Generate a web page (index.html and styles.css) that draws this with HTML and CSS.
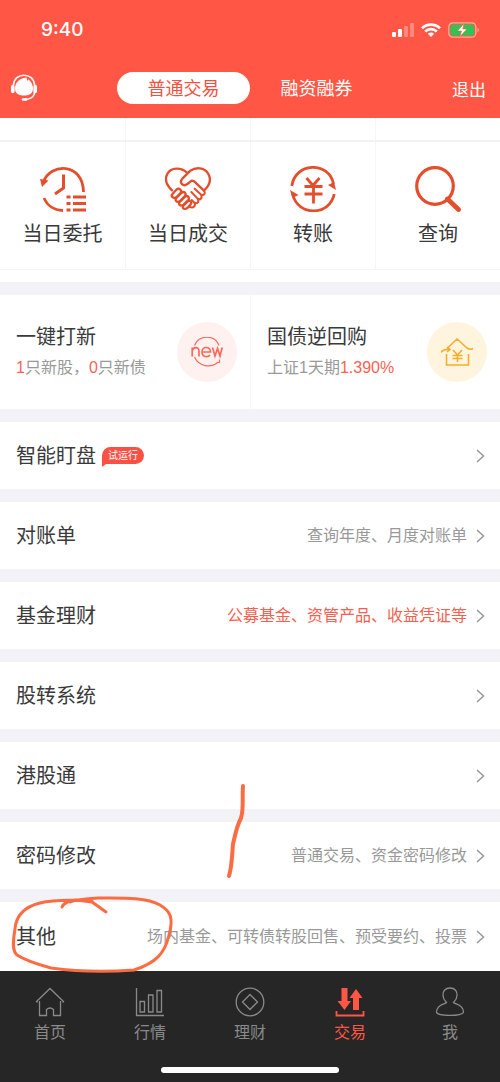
FILE: index.html
```html
<!DOCTYPE html>
<html lang="zh-CN">
<head>
<meta charset="utf-8">
<meta name="viewport" content="width=device-width, initial-scale=1">
<title>交易</title>
<link rel="stylesheet" href="styles.css">
</head>
<body>
<div class="app">
  <header class="header">
    <div class="status">
      <span class="time">9:40</span>
      <div class="status-icons">
        <svg width="22" height="14" viewBox="0 0 22 14" fill="#fff"><rect y="9" width="4" height="5" rx="1"/><rect x="6" y="6" width="4" height="8" rx="1"/><rect x="12" y="3" width="4" height="11" rx="1" opacity=".3"/><rect x="18" width="4" height="14" rx="1" opacity=".3"/></svg>
        <svg width="20" height="14" viewBox="0 0 20 14" fill="none" stroke="#fff" stroke-width="2.7"><path d="M1 5.2C6 .3 14 .3 19 5.200M4.200 8.500C7.500 5.300 12.500 5.300 15.800 8.500"/><path d="M10 14 6.800 10.800Q10 8.300 13.200 10.800Z" fill="#fff" stroke="none"/></svg>
        <svg width="32" height="16" viewBox="0 0 32 16"><rect x=".8" y=".8" width="27" height="14.400" rx="4" fill="none" stroke="#ffb09a" stroke-width="1.300"/><rect x="2.500" y="2.500" width="23.600" height="11" rx="2.500" fill="#30c455"/><path d="M29.500 5.500Q32 8 29.500 10.500Z" fill="#ffb09a"/><path d="M16 1.500 9.500 9H13.500L12 14.500 19 7H14.800Z" fill="#fff" stroke="#ff5645" stroke-width=".6"/></svg>
      </div>
    </div>
    <div class="topnav">
      <button class="service" aria-label="客服">
        <svg width="28" height="28" viewBox="0 0 28 28" fill="none" stroke="#fff"><path d="M3.500 11C4 -2 24 -2 24.500 11" stroke-width="1.500"/><path d="M2.800 12.500v5M25.200 12.500v5" stroke-width="3.600" stroke-linecap="round"/><path d="M16.500 3.500C9 4 5 9 5 14.500 5 19 8 21.500 14 21.500S23 19 23 14.500C23 10 20 6 18 5.500L17.500 7.500Z" fill="#fff" stroke="none"/><path d="M24.500 18C24.500 23 20 25.500 14 25.500" stroke-width="1.600"/><path d="M13 25.500H16" stroke-width="2.600" stroke-linecap="round"/></svg>
      </button>
      <div class="tabs">
        <button class="tab tab-on">普通交易</button>
        <button class="tab">融资融券</button>
      </div>
      <button class="logout">退出</button>
    </div>
  </header>

  <main class="main">
    <section class="panel">
      <div class="grid grid-tail"><span></span><span></span><span></span><span></span></div>
      <div class="grid">
        <button class="cell">
          <svg width="46" height="46" viewBox="0 0 46 46" fill="none" stroke="#e34f2c" stroke-width="2.800"><path d="M3.500 16C10 -3 43 -4 43.500 26M4 32C8 41 14 44 23 44.500"/><path d="M0 13 8.500 14.500 2 21Z" fill="#e34f2c" stroke="none"/><path d="M23.500 8.500V22L15 28" stroke-width="3"/><path d="M26.500 31h4M26.500 37.500h4M26.500 44h4M33 31h13M33 37.500h13M33 44h13" stroke-width="3"/></svg>
          <span>当日委托</span>
        </button>
        <button class="cell">
          <svg width="46" height="46" viewBox="45 34 138 138" fill="none" stroke="#e34f2c" stroke-width="7" stroke-linecap="round" stroke-linejoin="round"><path d="M66 107C48 90 44 71 53 56 63 39 92 36 111 54"/><path d="M162 108C180 91 184 72 174 56 163 38 138 37 121 48L97 72C86 85 100 97 112 88L125 78C133 78 135 82 139 86L162 108"/><path d="M68 117 79 105C88 98 98 107 91 116L80 127C70 134 61 125 68 117Z"/><path d="M80 129 94 115C103 108 111 117 104 125L90 139C80 146 72 136 80 129Z"/><path d="M90 141 104 127C113 120 121 129 114 137L101 150C91 157 82 148 90 141Z"/><path d="M101 152 112 141C120 135 128 143 121 150L113 159C104 167 93 160 101 152Z"/><path d="M162 108C168 118 160 124 152 119L134 102M152 119C159 130 151 137 143 132L124 112M143 132C149 143 141 149 133 144L125 136M133 144C138 153 131 161 120 157L117 156" stroke-width="6"/></svg>
          <span>当日成交</span>
        </button>
        <button class="cell">
          <svg width="46" height="46" viewBox="0 0 46 46" fill="none" stroke="#e34f2c" stroke-width="2.800"><path d="M1.800 20C5 -4 39 -5 43.500 18M44.200 28C40 50 8 51 2.500 28"/><path d="M38 19 44 16 46 24ZM0 24 8.500 29 2.500 32Z" fill="#e34f2c" stroke="none"/><path d="M16.500 12 23 19.500 29.500 12M14.500 20.500h18M14.500 28h18M23.500 20v17.500" stroke-width="2.800"/></svg>
          <span>转账</span>
        </button>
        <button class="cell">
          <svg width="46" height="46" viewBox="0 0 46 46" fill="none" stroke="#e34f2c"><circle cx="20" cy="20" r="18.300" stroke-width="3.200"/><path d="M32.500 33 43.500 43.500" stroke-width="4.800" stroke-linecap="round"/></svg>
          <span>查询</span>
        </button>
      </div>
    </section>

    <section class="cards">
      <a class="card" href="#ipo">
        <div>
          <h2>一键打新</h2>
          <p><em>1</em>只新股，<em>0</em>只新债</p>
        </div>
        <span class="badge badge-red">
          <svg width="32" height="30" viewBox="0 0 32 30" fill="none" stroke="#fa6a5b"><path d="M3.500 8.500C8 -2.500 24 -2.500 28 8.500M3.500 20C8 30 20 31 26.500 25.500H28.500V22.500" stroke-width="1.200"/><path d="M1.200 19.500V10.500M1.200 14C2 9.500 8 9.500 8 14V19.500M11 15H19.500C19.500 9 11 9 11 15 11 20.500 17 20.500 19 18M21.500 10.500 24 19 26.500 11.500 29 19 31.200 10.500" stroke-width="1.700"/></svg>
        </span>
      </a>
      <a class="card" href="#repo">
        <div>
          <h2>国债逆回购</h2>
          <p>上证1天期<em>1.390%</em></p>
        </div>
        <span class="badge badge-gold">
          <svg width="32" height="30" viewBox="0 0 32 30" fill="none" stroke="#f3ae2e" stroke-width="1.600"><path d="M7 10.500 16 2 26 11C28 12.500 30 12.500 32 11.500M0 15.500C2 12 5 12 9 12.500M6 10 9 12.500 6 15M5.500 17V28H27.500V17M12 13 16.500 18 21 13M11.500 18.500H21.500M11.500 21.500H21.500M16.500 18V25"/></svg>
        </span>
      </a>
    </section>

    <nav class="list">
      <a class="row" href="#watch"><span class="name">智能盯盘</span><span class="tag">试运行</span><span class="note"></span><svg class="chev" viewBox="0 0 9 14"><path d="M1 1 7.500 7 1 13"/></svg></a>
      <a class="row" href="#bill"><span class="name">对账单</span><span class="note">查询年度、月度对账单</span><svg class="chev" viewBox="0 0 9 14"><path d="M1 1 7.500 7 1 13"/></svg></a>
      <a class="row" href="#fund"><span class="name">基金理财</span><span class="note hot">公募基金、资管产品、收益凭证等</span><svg class="chev" viewBox="0 0 9 14"><path d="M1 1 7.500 7 1 13"/></svg></a>
      <a class="row" href="#neeq"><span class="name">股转系统</span><span class="note"></span><svg class="chev" viewBox="0 0 9 14"><path d="M1 1 7.500 7 1 13"/></svg></a>
      <a class="row" href="#hk"><span class="name">港股通</span><span class="note"></span><svg class="chev" viewBox="0 0 9 14"><path d="M1 1 7.500 7 1 13"/></svg></a>
      <a class="row" href="#password"><span class="name">密码修改</span><span class="note">普通交易、资金密码修改</span><svg class="chev" viewBox="0 0 9 14"><path d="M1 1 7.500 7 1 13"/></svg>
        <svg class="mark mark-line" width="20" height="96" viewBox="0 0 20 96"><path d="M16 2C15 14 17 25 14 34 9 44 8 52 6 60 5 72 5 82 2 92"/></svg></a>
      <a class="row" href="#other"><span class="name">其他</span><span class="note">场内基金、可转债转股回售、预受要约、投票</span><svg class="chev" viewBox="0 0 9 14"><path d="M1 1 7.500 7 1 13"/></svg>
        <svg class="mark mark-ring" width="164" height="78" viewBox="0 0 164 78"><path d="M50 10C52 5 58 4 64 3L80 5 94 15M80 4C62 3 40 3 28 6 12 10 4 18 3 32 1 44 0 54 5 58 14 64 28 68 39 71 68 75 96 75 122 73 144 66 153 56 157 38 162 20 158 14 148 8 134 0 110 1 86 1 76 2 66 2 58 5"/></svg></a>
    </nav>
  </main>

  <footer class="tabbar">
    <nav class="tabitems">
      <a href="#home"><svg width="30" height="30" viewBox="0 0 30 30"><path d="M2.500 15.500 1.500 14.500 15 1.500 28.500 14.500 27.500 15.500M4.500 14V28.500H11.500V22.500Q15 19.500 18.500 22.500V28.500H25.500V14"/></svg>首页</a>
      <a href="#market"><svg width="30" height="30" viewBox="0 0 30 30"><path d="M1.500 1V28.500H29M5 14.500H9.500V25H5ZM13.500 8H18V25H13.500ZM22 3.500H26.500V25H22Z"/></svg>行情</a>
      <a href="#wealth"><svg width="30" height="30" viewBox="0 0 30 30"><circle cx="15" cy="15" r="13.800"/><path d="M15 7.500 22.500 15 15 22.500 7.500 15Z"/></svg>理财</a>
      <a class="current" href="#trade"><svg width="30" height="30" viewBox="0 0 30 30"><path d="M6.500 1H12.500V14H16L9.500 23 2.500 14H6.500ZM18 23V11H14.500L21 2 27.500 11H24V23Z" fill="#ff5645" stroke="none"/><path d="M1.500 24V28.500H28.500V24" stroke-width="1.800"/></svg>交易</a>
      <a href="#me"><svg width="30" height="30" viewBox="0 0 30 30"><path d="M15 1C10 1 7.500 4.500 8 8.500 8 11.500 9.500 13.500 11.500 15.500 10 17.500 2 17 1.500 25 1.500 29.500 28.500 29.500 28.500 25 28 17 20 17.500 18.500 15.500 20.500 13.500 22 11.500 22 8.500 22.500 4.500 20 1 15 1Z"/></svg>我</a>
    </nav>
    <div class="home-bar"></div>
  </footer>
</div>
</body>
</html>
```
FILE: styles.css
```css
* { box-sizing: border-box; }
body {
  margin: 0;
  background: #f2f2f7;
  color: #3a3a3a;
  font-family: "Liberation Sans", "Noto Sans CJK SC", sans-serif;
}
button {
  border: 0;
  padding: 0;
  background: none;
  color: inherit;
  font: inherit;
}
a { color: inherit; text-decoration: none; }
h2, p { margin: 0; font-weight: 400; }
svg { display: block; flex: none; }

.app { min-height: 100vh; display: flex; flex-direction: column; }

.header { background: #ff5645; color: #fff; padding: 18px 14px 14px; }
.status {
  display: flex;
  justify-content: space-between;
  align-items: center;
  height: 24px;
  padding: 0 6px 0 27px;
}
.time { font: 500 19px/24px Inter, sans-serif; }
.status-icons { display: flex; align-items: center; gap: 7px; }
.topnav {
  display: grid;
  grid-template-columns: 1fr auto 1fr;
  align-items: center;
  margin-top: 30px;
}
.service { justify-self: start; margin-left: -4px; }
.tabs { display: flex; }
.tab { height: 32px; width: 133px; border-radius: 16px; font-size: 18px; line-height: 34px; }
.tab-on { background: #fff; color: #f5503f; }
.logout { justify-self: end; font-size: 17px; }

.main { display: flex; flex-direction: column; gap: 13px; }
.panel { background: #fff; padding-bottom: 12px; }
.grid { display: grid; grid-template-columns: repeat(4, 1fr); border-bottom: 1px solid #f5f5f7; }
.grid > * + * { border-left: 1px solid #f5f5f7; }
.grid-tail { height: 24px; border-bottom: 2px solid #f2f2f4; }
.cell {
  display: flex;
  flex-direction: column;
  align-items: center;
  gap: 7px;
  padding: 24px 0 20px;
  font-size: 20px;
  line-height: 30px;
}

.cards { display: grid; grid-template-columns: 1fr 1fr; background: #fff; }
.card {
  display: flex;
  justify-content: space-between;
  align-items: center;
  height: 114px;
  padding: 0 13px 0 16px;
}
.card + .card { border-left: 1px solid #f5f5f7; }
.card h2 { font-size: 20px; line-height: 32px; }
.card p { font-size: 16px; line-height: 30px; color: #999; }
.card em { font-style: normal; color: #fa5f55; }
.badge {
  display: flex;
  align-items: center;
  justify-content: center;
  width: 60px;
  height: 60px;
  border-radius: 50%;
}
.badge-red { background: #fff1ef; }
.badge-gold { background: #fff5df; }

.list { display: flex; flex-direction: column; gap: 13px; }
.row {
  position: relative;
  display: flex;
  align-items: center;
  height: 67px;
  padding: 0 15px 0 16px;
  background: #fff;
}
.row:last-child { height: 69px; }
.name { font-size: 20px; line-height: 30px; }
.tag {
  position: relative;
  margin-left: 6px;
  padding: 0 6px;
  border-radius: 9px 9px 9px 0;
  background: #fb5043;
  color: #fff;
  font-size: 10px;
  line-height: 17px;
}
.tag::after {
  content: "";
  position: absolute;
  left: 0;
  top: 100%;
  border-top: 3px solid #fb5043;
  border-right: 4px solid transparent;
}
.note { flex: 1; text-align: right; font-size: 16px; line-height: 24px; color: #999; }
.hot { color: #f4604f; }
.chev { width: 9px; height: 14px; margin-left: 9px; fill: none; stroke: #999; stroke-width: 1.5; }
.mark {
  position: absolute;
  z-index: 1;
  fill: none;
  stroke: #fa6d42;
  stroke-width: 4;
  stroke-linecap: round;
  overflow: visible;
}
.mark-line { left: 227px; bottom: 9px; }
.mark-ring { left: 12px; top: -5px; stroke-width: 3; }

.tabbar { flex: 1; background: #262626; color: #8a8a8a; padding: 16px 0 9px; }
.tabitems { display: grid; grid-template-columns: repeat(5, 1fr); }
.tabitems a {
  display: flex;
  flex-direction: column;
  align-items: center;
  gap: 4px;
  font-size: 16px;
  line-height: 24px;
}
.tabitems svg { fill: none; stroke: currentColor; stroke-width: 1.3; }
.tabitems .current { color: #ff5645; }
.home-bar { width: 178px; height: 6px; margin: 22px auto 0; border-radius: 3px; background: #fff; }
```
